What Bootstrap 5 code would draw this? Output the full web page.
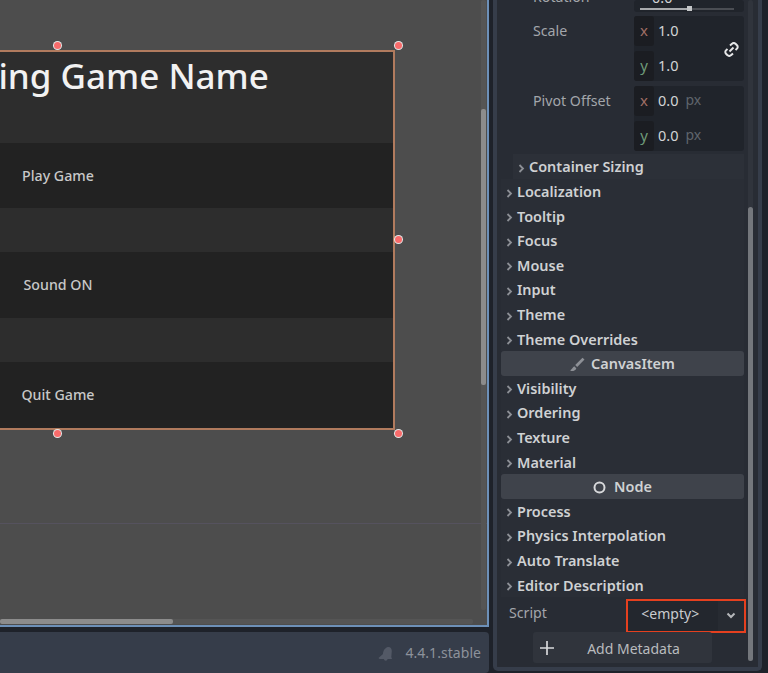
<!DOCTYPE html>
<html lang="en">
<head>
<meta charset="UTF-8" />
<title>Godot Inspector</title>
<link href="https://cdn.jsdelivr.net/npm/bootstrap@5.3.0/dist/css/bootstrap.min.css" rel="stylesheet" />
<style>
  html, body { height: 673px; overflow: hidden; }
  body { background: #1e222a; font-family: "Noto Sans", sans-serif; color: #c9cbce; font-size: 14px; line-height: 1; }

  .editor-col { width: 489px; }
  .viewport { height: 627px; background: #4d4d4d; border-right: 2px solid #6d90b8; border-bottom: 2px solid #6d90b8; overflow: hidden; }
  .statusbar { height: 41px; margin-top: 5px; padding: 1px 8px 0 0; background: #363d4a; border-radius: 0 4px 4px 0; color: #8d929b; }
  .statusbar span { font-size: 14px; letter-spacing: .05px; }

  .menu-panel { position: absolute; left: -281px; top: 50px; width: 676px; height: 380px; border: 2px solid #b17b5e; background: #2d2d2d; }
  .menu-title { height: 47px; padding-left: 24px; font-size: 35px; font-weight: 500; color: #f2f2f2; white-space: nowrap; }
  .menu-btn { height: 66px; padding-left: 2px; background: #222; color: #c8c8c8; font-size: 14.2px; font-weight: 500; }
  .menu-btn.first { height: 65px; padding-top: 2px; }
  .spacer-top { height: 44px; }
  .spacer { height: 44px; }
  .handle { position: absolute; width: 7px; height: 7px; border-radius: 50%; background: #f86b6b; box-shadow: 0 0 0 1px #e8e8e8; }
  .hx-mid { left: 54px; }
  .hx-end { left: 395px; }
  .hy-top { top: 42px; }
  .hy-mid { top: 236px; }
  .hy-end { top: 430px; }
  .guide { position: absolute; left: 0; right: 0; top: 523px; height: 1px; background: #55525e; }
  .vbar { position: absolute; left: 481px; top: 0; width: 5px; height: 610px; background: #555; border-radius: 2px; }
  .vbar i { position: absolute; top: 109px; height: 276px; left: 0; right: 0; background: #8c8c8c; border-radius: 2px; }
  .hbar { position: absolute; left: 0; width: 473px; top: 619px; height: 5px; background: #555; border-radius: 2px; }
  .hbar i { position: absolute; left: 0; width: 173px; top: 0; bottom: 0; background: #8c8c8c; border-radius: 2px; }

  .inspector { position: relative; width: 269px; height: 671px; margin-left: 4px; border: 4px solid #363d4a; border-top: 0; border-radius: 0 0 5px 5px; background: #282c34; overflow: hidden; padding-left: 4px; }
  .inspector-body { width: 243px; }
  .sb-track { position: absolute; left: 251px; top: 0; width: 5px; height: 661px; background: #30343c; border-radius: 3px; }
  .sb-track i { position: absolute; top: 207px; bottom: 0; left: 0; right: 0; background: #74777c; border-radius: 3px; }

  .prop-label { width: 133px; flex: none; padding: 8px 0 0 32px; color: #a3a6ab; font-size: 14.2px; white-space: nowrap; }
  .prop-label.clipped { padding-top: 0; height: 12px; margin-top: -10px; }
  .prop-fields { width: 110px; background: #20242b; border-radius: 3px; position: relative; }
  .prop-fields.clipped-top { height: 12px; }
  .rot-val { margin: -10px 0 4px 18px; height: 14px; color: #d2d4d6; font-size: 14.5px; }
  .prop-wrap { margin-bottom: 5px; }
  .prop-wrap:last-child { margin-bottom: 3px; }
  .axis-row { height: 30px; }
  .axis-gap { height: 5px; }
  .axis { width: 20px; height: 30px; padding-bottom: 1px; background: #1b1d22; border-radius: 3px; font-size: 15px; }
  .axis-x { color: #a06f66; }
  .axis-y { color: #6e9a78; }
  .val { margin: -2px 0 0 4px; color: #d2d4d6; font-size: 14.5px; }
  .unit { color: #5f646c; font-size: 14px; margin: -2px 0 0 7px; }
  .link-ico { position: absolute; right: 5px; top: 26px; }
  .slider-line { position: relative; height: 2px; width: 94px; margin-left: 6px; background: #4a4d53; }
  .slider-line i { position: absolute; left: 0; width: 49px; height: 2px; background: #a8aaad; }
  .slider-line b { position: absolute; left: 47px; top: -2px; width: 5px; height: 5px; background: #c4c6c8; }

  .section { height: 24.6px; padding-top: 2px; font-weight: 600; font-size: 14.45px; color: #cfd1d3; background: #2a2e36; white-space: nowrap; }
  .section.sub { margin-left: 12px; height: 25px; background: #2c3038; }
  .chev { width: 16px; flex: none; }
  .cat { height: 24.6px; padding-top: 2px; border-radius: 3px; background: #3f434b; font-weight: 600; font-size: 14.45px; color: #cfd1d3; }
  .cat-brush { margin-right: 6px; }

  .script-row { height: 34px; margin-top: 1.5px; }
  .script-label { width: 124.5px; flex: none; padding: 0 0 4px 8px; color: #a3a6ab; font-size: 14.2px; }
  .script-box { width: 120.5px; height: 34px; border: 2px solid #e5401f; flex: none; background: #23272e; }
  .script-box .txt { flex: 1; text-align: center; color: #c9cbce; font-size: 14px; padding: 0 5px 3px 0; }
  .script-box .drop { width: 26px; height: 30px; background: #272b32; }
  .meta-btn { position: relative; width: 179px; height: 31px; margin: -1px 0 0 32px; padding: 2px 0 0 6px; background: #30343c; border-radius: 3px; color: #b9bbbe; font-size: 14px; border: 0; }
  .meta-btn span { flex: 1; text-align: center; padding-top: 1px; }
</style>
</head>
<body>
<div class="d-flex">
  <div class="editor-col flex-shrink-0">
    <div class="viewport position-relative">
      <div class="menu-panel d-flex flex-column">
        <div class="menu-title d-flex align-items-center justify-content-center">Something Game Name</div>
        <div class="spacer-top"></div>
        <div class="menu-btn first d-flex align-items-center justify-content-center">Play Game</div>
        <div class="spacer"></div>
        <div class="menu-btn d-flex align-items-center justify-content-center">Sound ON</div>
        <div class="spacer"></div>
        <div class="menu-btn d-flex align-items-center justify-content-center">Quit Game</div>
      </div>
      <span class="handle hx-mid hy-top"></span>
      <span class="handle hx-end hy-top"></span>
      <span class="handle hx-end hy-mid"></span>
      <span class="handle hx-mid hy-end"></span>
      <span class="handle hx-end hy-end"></span>
      <div class="guide"></div>
      <div class="vbar"><i></i></div>
      <div class="hbar"><i></i></div>
    </div>
    <div class="statusbar d-flex align-items-center justify-content-end gap-2">
      <svg class="me-1" width="15" height="15" viewBox="0 0 15 15"><path d="M0.500 12 5 8c0-3 2-6.500 5-7 2.500-.3 3.800 1.500 3.800 4l-.5 6 .7 2H9.500c0 1-.7 1.700-1.700 1.700S6 14 6 13H1.500z" fill="#535966"/></svg>
      <span>4.4.1.stable</span>
    </div>
  </div>

  <div class="inspector">
    <div class="inspector-body">
      <div class="d-flex mb-1">
        <div class="prop-label clipped">Rotation</div>
        <div class="prop-fields clipped-top">
          <div class="rot-val">0.0</div>
          <div class="slider-line"><i></i><b></b></div>
        </div>
      </div>

      <div id="props"></div>
      <div class="section sub d-flex align-items-center"><span class="chev text-center"><svg width="7" height="9" viewBox="0 0 7 9"><path d="M1.500 1 5 4.500 1.500 8" fill="none" stroke="#8d9096" stroke-width="1.8"/></svg></span>Container Sizing</div>
      <div id="sections"></div>

      <div class="script-row d-flex align-items-center">
        <div class="script-label">Script</div>
        <div class="script-box d-flex align-items-center">
          <div class="txt">&lt;empty&gt;</div>
          <div class="drop d-flex align-items-center justify-content-center"><svg width="10" height="7" viewBox="0 0 10 7"><path d="M1.500 1.500 5 5l3.500-3.500" fill="none" stroke="#b5b7ba" stroke-width="2"/></svg></div>
        </div>
      </div>
      <button class="meta-btn d-flex align-items-center" type="button">
        <svg width="16" height="16" viewBox="0 0 16 16"><path d="M8 1v14M1 8h14" stroke="#d8d9db" stroke-width="1.7"/></svg>
        <span>Add Metadata</span>
      </button>
    </div>
    <div class="sb-track"><i></i></div>
  </div>
</div>

<script>
  // Inspector rows are repetitive, so build them from data
  var chev = '<svg width="7" height="9" viewBox="0 0 7 9"><path d="M1.500 1 5 4.500 1.500 8" fill="none" stroke="#8d9096" stroke-width="1.8"/></svg>';
  var brush = '<svg class="cat-brush" width="15" height="15" viewBox="0 0 15 15"><path d="M12.500.8 14.500 2.600 7.200 10 5.200 8zM4.200 9.200 6.300 11.200C6 13.200 3.500 14.300 1 14c-.6-.1-.8-.6-.4-1 1.400-.8 2-2.800 3.600-3.800z" fill="#8d9096"/></svg>';
  var ring = '<svg class="me-2" width="13" height="13" viewBox="0 0 13 13"><circle cx="6.500" cy="6.500" r="5" fill="none" stroke="#d8d9db" stroke-width="2"/></svg>';
  var rows = [
    "Localization", "Tooltip", "Focus", "Mouse", "Input", "Theme", "Theme Overrides",
    { cat: "CanvasItem", icon: brush },
    "Visibility", "Ordering", "Texture", "Material",
    { cat: "Node", icon: ring },
    "Process", "Physics Interpolation", "Auto Translate", "Editor Description"
  ];
  document.getElementById("sections").innerHTML = rows.map(function (r) {
    if (r.cat) {
      return '<div class="cat d-flex align-items-center justify-content-center">' + r.icon + r.cat + "</div>";
    }
    return '<div class="section d-flex align-items-center"><span class="chev text-center">' + chev + "</span>" + r + "</div>";
  }).join("");

  function axisRow(axis, val, unit) {
    return '<div class="axis-row d-flex align-items-center"><div class="axis axis-' + axis + ' d-flex align-items-center justify-content-center">' + axis + '</div>' +
      '<div class="val">' + val + '</div>' + (unit ? '<div class="unit">' + unit + '</div>' : '') + '</div>';
  }
  function prop(label, unit, val, link) {
    return '<div class="prop-wrap d-flex"><div class="prop-label">' + label + '</div><div class="prop-fields">' +
      axisRow("x", val, unit) + '<div class="axis-gap"></div>' + axisRow("y", val, unit) + (link || '') + '</div></div>';
  }
  var linkIco = '<svg class="link-ico" width="15" height="15" viewBox="0 0 15 15"><g fill="none" stroke="#e6e7e8" stroke-width="2"><path d="M6 3.500 8 1.800a2.300 2.300 0 0 1 3.500 0l1.500 1.500a2.300 2.300 0 0 1 0 3.300L11.500 8"/><path d="M9 11.500 7 13.200a2.300 2.300 0 0 1-3.500 0L2 11.700a2.300 2.300 0 0 1 0-3.300L3.500 7"/><path d="m5.500 9.500 4-4"/></g></svg>';
  document.getElementById("props").innerHTML = prop("Scale", "", "1.0", linkIco) + prop("Pivot Offset", "px", "0.0");
</script>
<script src="https://cdn.jsdelivr.net/npm/bootstrap@5.3.0/dist/js/bootstrap.bundle.min.js"></script>
</body>
</html>
